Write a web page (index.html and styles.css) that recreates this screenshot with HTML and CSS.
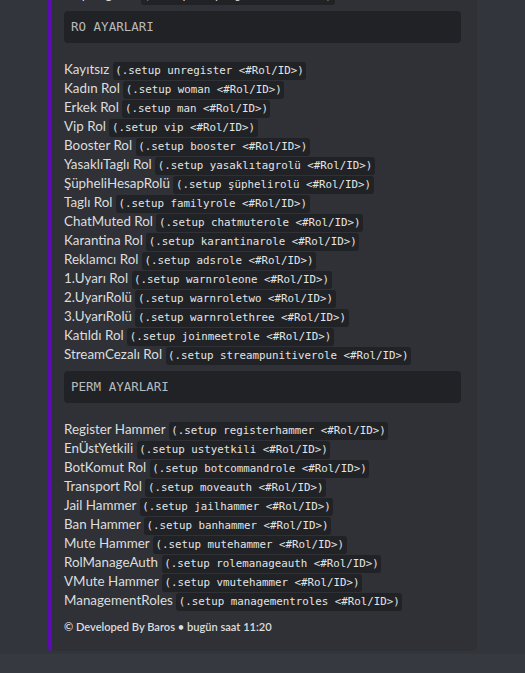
FILE: index.html
```html
<!DOCTYPE html>
<html lang="tr">
<head>
<meta charset="utf-8">
<title>Setup</title>
<link rel="stylesheet" href="styles.css">
</head>
<body>
<div class="message">
  <div class="embed">
    <div class="desc">
      <div class="line">Ekip Tagı Rol <code class="ic">(.setup ekiptagrol &lt;#Rol/ID&gt;)</code></div>
      <pre class="block">RO AYARLARI</pre>
      <div class="line">Kayıtsız <code class="ic">(.setup unregister &lt;#Rol/ID&gt;)</code></div>
      <div class="line">Kadın Rol <code class="ic">(.setup woman &lt;#Rol/ID&gt;)</code></div>
      <div class="line">Erkek Rol <code class="ic">(.setup man &lt;#Rol/ID&gt;)</code></div>
      <div class="line">Vip Rol <code class="ic">(.setup vip &lt;#Rol/ID&gt;)</code></div>
      <div class="line">Booster Rol <code class="ic">(.setup booster &lt;#Rol/ID&gt;)</code></div>
      <div class="line">YasaklıTaglı Rol <code class="ic">(.setup yasaklıtagrolü &lt;#Rol/ID&gt;)</code></div>
      <div class="line">ŞüpheliHesapRolü <code class="ic">(.setup şüphelirolü &lt;#Rol/ID&gt;)</code></div>
      <div class="line">Taglı Rol <code class="ic">(.setup familyrole &lt;#Rol/ID&gt;)</code></div>
      <div class="line">ChatMuted Rol <code class="ic">(.setup chatmuterole &lt;#Rol/ID&gt;)</code></div>
      <div class="line">Karantina Rol <code class="ic">(.setup karantinarole &lt;#Rol/ID&gt;)</code></div>
      <div class="line">Reklamcı Rol <code class="ic">(.setup adsrole &lt;#Rol/ID&gt;)</code></div>
      <div class="line">1.Uyarı Rol <code class="ic">(.setup warnroleone &lt;#Rol/ID&gt;)</code></div>
      <div class="line">2.UyarıRolü <code class="ic">(.setup warnroletwo &lt;#Rol/ID&gt;)</code></div>
      <div class="line">3.UyarıRolü <code class="ic">(.setup warnrolethree &lt;#Rol/ID&gt;)</code></div>
      <div class="line">Katıldı Rol <code class="ic">(.setup joinmeetrole &lt;#Rol/ID&gt;)</code></div>
      <div class="line">StreamCezalı Rol <code class="ic">(.setup streampunitiverole &lt;#Rol/ID&gt;)</code></div>
      <pre class="block">PERM AYARLARI</pre>
      <div class="line">Register Hammer <code class="ic">(.setup registerhammer &lt;#Rol/ID&gt;)</code></div>
      <div class="line">EnÜstYetkili <code class="ic">(.setup ustyetkili &lt;#Rol/ID&gt;)</code></div>
      <div class="line">BotKomut Rol <code class="ic">(.setup botcommandrole &lt;#Rol/ID&gt;)</code></div>
      <div class="line">Transport Rol <code class="ic">(.setup moveauth &lt;#Rol/ID&gt;)</code></div>
      <div class="line">Jail Hammer <code class="ic">(.setup jailhammer &lt;#Rol/ID&gt;)</code></div>
      <div class="line">Ban Hammer <code class="ic">(.setup banhammer &lt;#Rol/ID&gt;)</code></div>
      <div class="line">Mute Hammer <code class="ic">(.setup mutehammer &lt;#Rol/ID&gt;)</code></div>
      <div class="line">RolManageAuth <code class="ic">(.setup rolemanageauth &lt;#Rol/ID&gt;)</code></div>
      <div class="line">VMute Hammer <code class="ic">(.setup vmutehammer &lt;#Rol/ID&gt;)</code></div>
      <div class="line">ManagementRoles <code class="ic">(.setup managementroles &lt;#Rol/ID&gt;)</code></div>
    </div>
    <div class="footer">© Developed By Baros • bugün saat 11:20</div>
  </div>
</div>
</body>
</html>
```

FILE: styles.css
```css
html, body {
  margin: 0;
  padding: 0;
  background: #36393f;
}

body {
  font-family: Lato, "Noto Sans", sans-serif;
  color: #dcddde;
  overflow: hidden;
}

.message {
  background: #32353b;
  margin-top: -22px;
  padding: 0 48px 3px 48px;
}

.embed {
  background: #2f3136;
  border-left: 4px solid #5b0cb6;
  border-radius: 4px;
  padding: 8px 16px 16px 12px;
}

.desc {
  font-size: 13.4px;
}

.line {
  height: 19px;
  line-height: 17px;
  white-space: nowrap;
}

.ic {
  display: inline-block;
  vertical-align: baseline;
  height: 18px;
  line-height: 18px;
  padding: 0 2.6px;
  background: #202225;
  border-radius: 3px;
  font-family: "DejaVu Sans Mono", monospace;
  font-size: 10.8px;
  color: #e3e4e6;
}

.block {
  margin: 6px 0 18px 0;
  height: 32px;
  line-height: 32px;
  padding: 0 7px;
  background: #202225;
  border-radius: 4px;
  font-family: "DejaVu Sans Mono", monospace;
  font-size: 12.5px;
  color: #b9bbbe;
}

.footer {
  margin-top: 8px;
  height: 16px;
  line-height: 16px;
  font-size: 11.1px;
  font-weight: 600;
  color: #dcddde;
}
```
